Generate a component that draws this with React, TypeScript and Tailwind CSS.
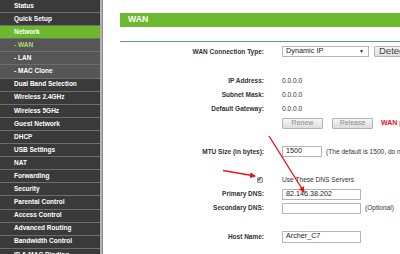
const menu: { label: string; kind?: "active" | "sub" | "subActive" }[] = [
  { label: "Status" },
  { label: "Quick Setup" },
  { label: "Network", kind: "active" },
  { label: "- WAN", kind: "subActive" },
  { label: "- LAN", kind: "sub" },
  { label: "- MAC Clone", kind: "sub" },
  { label: "Dual Band Selection" },
  { label: "Wireless 2.4GHz" },
  { label: "Wireless 5GHz" },
  { label: "Guest Network" },
  { label: "DHCP" },
  { label: "USB Settings" },
  { label: "NAT" },
  { label: "Forwarding" },
  { label: "Security" },
  { label: "Parental Control" },
  { label: "Access Control" },
  { label: "Advanced Routing" },
  { label: "Bandwidth Control" },
  { label: "IP & MAC Binding" },
];

function Sidebar() {
  return (
    <div className="flex w-[100px] shrink-0 flex-col bg-[#3a3a3a]">
      {menu.map((m) => {
        const bg =
          m.kind === "active"
            ? "bg-[#6bb82f]"
            : m.kind === "sub" || m.kind === "subActive"
            ? "bg-[#565656]"
            : "bg-[#3a3a3a]";
        const color = m.kind === "subActive" ? "text-[#b5d96a]" : "text-white";
        return (
          <div
            key={m.label}
            className={`flex h-[13.1px] shrink-0 items-center border-b border-[#6e6e6e] pl-[14px] text-[6.5px] font-bold leading-none ${bg} ${color}`}
          >
            {m.label}
          </div>
        );
      })}
    </div>
  );
}

function Row({
  label,
  top,
  h = 13,
  children,
}: {
  label?: React.ReactNode;
  top: number;
  h?: number;
  children?: React.ReactNode;
}) {
  return (
    <div className="flex items-center whitespace-nowrap" style={{ marginTop: top, height: h }}>
      <div className="flex w-[144px] shrink-0 justify-end text-[6.5px] font-bold text-[#333]">
        {label}
      </div>
      <div className="ml-[18px] flex items-center text-[6.6px] text-[#333]">{children}</div>
    </div>
  );
}

function TextBox({ w, value }: { w: number; value?: string }) {
  return (
    <div
      className="flex h-[11.5px] items-center border border-[#b5b5b5] bg-white pl-[3px] text-[7.2px] text-[#222]"
      style={{ width: w }}
    >
      {value}
    </div>
  );
}

function Btn({ label, w }: { label: string; w: number }) {
  return (
    <div
      className="flex h-[11px] items-center justify-center rounded-[1px] border border-[#b4b4b4] bg-gradient-to-b from-[#f6f6f6] to-[#dedede] text-[7px] text-[#8a8a8a]"
      style={{ width: w }}
    >
      {label}
    </div>
  );
}

export default function App() {
  return (
    <div
      className="relative flex h-[254px] w-[400px] overflow-hidden bg-white"
      style={{ fontFamily: '"Liberation Sans", Arial, sans-serif' }}
    >
      <Sidebar />
      <div className="w-[2px] shrink-0 bg-[#b3b3b3]" />
      <div className="w-[1px] shrink-0 bg-[#8a8a8a]" />

      <div className="flex min-w-0 flex-1 flex-col bg-white">
        <div className="ml-[17px] mt-[13px] flex h-[13.5px] shrink-0 items-center bg-[#6ab92f] pl-[8px] text-[8.7px] font-bold text-white">
          WAN
        </div>
        <div className="ml-[17px] mt-[14.5px] h-[1px] shrink-0 bg-[#5e9e7c]" />

        <div className="flex flex-col pl-[17px]">
          <Row label="WAN Connection Type:" top={3} h={13}>
            <div className="flex h-[11.5px] w-[87px] items-center justify-between border border-[#b5b5b5] bg-white pl-[3px] pr-[4px] text-[7.3px] text-[#222]">
              <span>Dynamic IP</span>
              <span className="text-[5px]">▼</span>
            </div>
            <div className="ml-[5px] flex h-[11.5px] w-[44px] items-center rounded-[1px] border border-[#b4b4b4] bg-gradient-to-b from-[#f6f6f6] to-[#dedede] pl-[4px] text-[9.5px] text-[#444]">
              Detect
            </div>
          </Row>

          <Row label="IP Address:" top={16} h={14}>
            0.0.0.0
          </Row>
          <Row label="Subnet Mask:" top={0} h={14}>
            0.0.0.0
          </Row>
          <Row label="Default Gateway:" top={0} h={14}>
            0.0.0.0
          </Row>
          <Row top={0} h={14.3}>
            <Btn label="Renew" w={41} />
            <div className="ml-[9px]">
              <Btn label="Release" w={41} />
            </div>
            <span className="ml-[8px] text-[7px] font-bold text-[#e8141b]">WAN port is unplugged!</span>
          </Row>

          <Row label="MTU Size (in bytes):" top={14.5} h={13.5}>
            <TextBox w={40} value="1500" />
            <span className="ml-[4px]">(The default is 1500, do not change unless necessary.)</span>
          </Row>

          <Row
            label={
              <div className="mr-[1px] flex h-[6.5px] w-[6.5px] items-center justify-center rounded-[1px] border border-[#9a9a9a] bg-[#d8d8d8] text-[5.5px] font-bold leading-none text-[#222]">
                ✓
              </div>
            }
            top={15}
            h={13.5}
          >
            Use These DNS Servers
          </Row>
          <Row label="Primary DNS:" top={1} h={13}>
            <TextBox w={79} value="82.146.38.202" />
          </Row>
          <Row label="Secondary DNS:" top={1} h={13}>
            <TextBox w={79} />
            <span className="ml-[4px]">(Optional)</span>
          </Row>
          <Row label="Host Name:" top={15.5} h={13}>
            <TextBox w={79} value="Archer_C7" />
          </Row>
        </div>
      </div>

      <svg className="pointer-events-none absolute left-0 top-0" width="400" height="254">
        <defs>
          <marker id="ah" markerWidth="6" markerHeight="6" refX="5" refY="3" orient="auto" markerUnits="userSpaceOnUse">
            <path d="M0,0 L6,3 L0,6 Z" fill="#e8161b" />
          </marker>
        </defs>
        <line x1="269" y1="136" x2="304" y2="192" stroke="#e8161b" strokeWidth="1.4" markerEnd="url(#ah)" />
        <line x1="223" y1="170.5" x2="255" y2="176" stroke="#e8161b" strokeWidth="1.4" markerEnd="url(#ah)" />
      </svg>
    </div>
  );
}
